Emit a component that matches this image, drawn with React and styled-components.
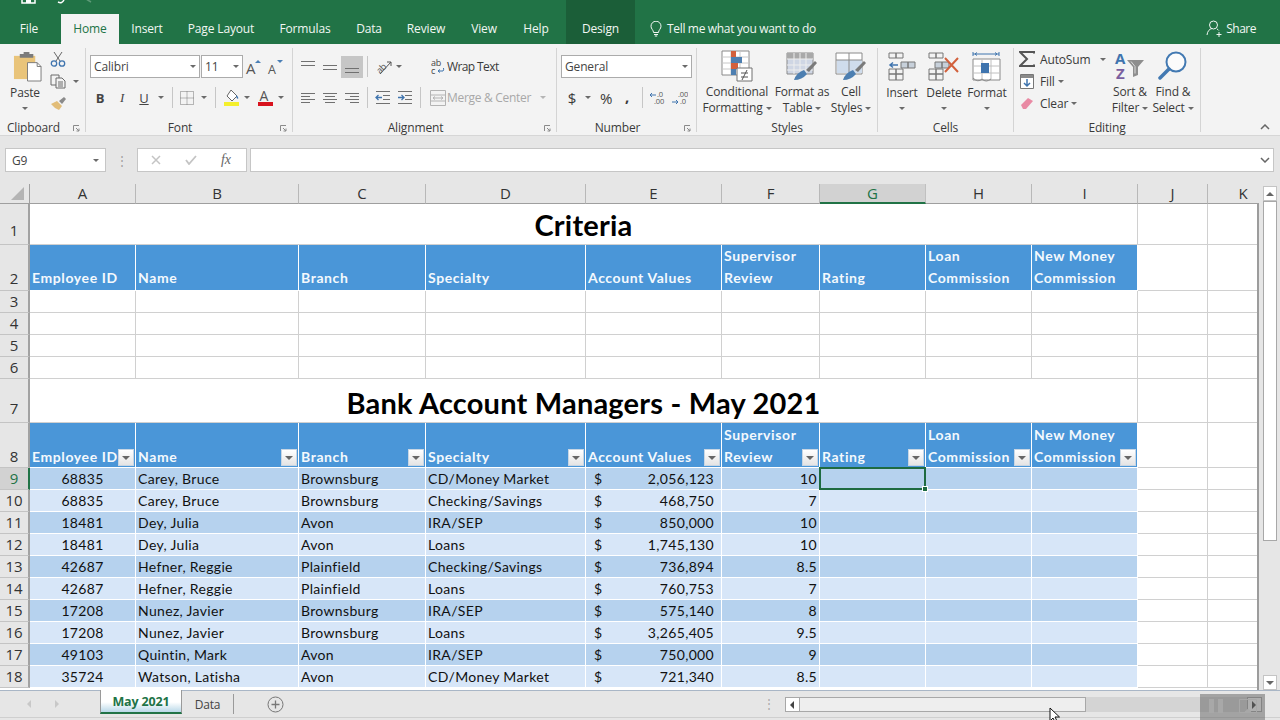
import React from "react";
import styled, { createGlobalStyle } from "styled-components";

const Global = createGlobalStyle`
  html, body { margin: 0; padding: 0; background: #e6e6e6; }
  * { box-sizing: border-box; }
`;

const Page = styled.div`
  width: 1280px; height: 720px; overflow: hidden; position: relative;
  display: flex; flex-direction: column; background: #e6e6e6;
  font-family: "Open Sans", "Liberation Sans", sans-serif; font-size: 12px; color: #3a3a3a; letter-spacing: -.15px;
`;
const TitleBar = styled.div`height: 14px; background: #217346; display: flex; align-items: flex-start; overflow: hidden;`;
const TabBar = styled.div`height: 30px; background: #217346; display: flex; align-items: stretch; color: #f1f7f3; position: relative;`;
const Tab = styled.div`
  width: ${p => p.$w}px; display: flex; align-items: center; justify-content: center;
  background: ${p => p.$active ? "#f3f3f3" : "transparent"}; color: ${p => p.$active ? "#217346" : "inherit"};
  margin-left: ${p => p.$ml || 0}px; padding-bottom: 1px;
`;
const DesignTab = styled(Tab)`height: 44px; margin-top: -14px; padding-top: 14px; background: #1b5e38; z-index: 1;`;
const TellMe = styled.div`display: flex; align-items: center; gap: 5px; margin-left: 15px; padding-bottom: 1px; letter-spacing: -.33px;`;
const Share = styled.div`margin-left: auto; margin-right: 24px; display: flex; align-items: center; gap: 3px; padding-bottom: 1px; letter-spacing: -.5px;`;

const Ribbon = styled.div`height: 92px; background: #f3f3f3; display: flex; position: relative; border-bottom: 1px solid #d6d6d6;`;
const Group = styled.div`
  width: ${p => p.$w}px; height: 84px; margin-top: 4px; border-right: 1px solid #d4d4d4;
  display: flex; flex-direction: column; position: relative;
`;
const GroupBody = styled.div`flex: 1; display: flex; padding-left: ${p => p.$pl || 0}px; min-height: 0;`;
const RowStack = styled.div`display: flex; flex-direction: column; padding: 7px 0 0 ${p => p.$pl || 0}px; gap: 8px;`;
const ToolRow = styled.div`display: flex; align-items: center; height: ${p => p.$h || 23}px;`;
const Footer = styled.div`height: 16px; display: flex; align-items: center; position: relative; top: 4px;`;
const GroupLabel = styled.div`flex: 1; text-align: center; white-space: nowrap; line-height: 16px;`;
const Launcher = styled.div`width: 18px; display: flex; justify-content: center; align-items: center;`;
const Slot = styled.div`
  width: ${p => p.$w}px; height: 22px; display: flex; align-items: center; justify-content: center; flex: none;
  margin-left: ${p => p.$ml || 0}px; background: ${p => p.$on ? "#c6c6c6" : "transparent"};
`;
const Sep = styled.div`width: 1px; height: 21px; background: #c6c6c6;`;
const Caret = styled.span`
  display: inline-block; width: 0; height: 0; border-left: 3px solid transparent; border-right: 3px solid transparent;
  border-top: 3px solid ${p => p.$c || "#6a6a6a"}; margin-left: ${p => p.$ml || 0}px; vertical-align: middle; flex: none;
`;
const Select = styled.div`
  width: ${p => p.$w}px; height: 23px; background: #fff; border: 1px solid #ababab; margin-left: ${p => p.$ml || 0}px;
  display: flex; align-items: center; justify-content: space-between; padding: 0 3px 0 3px; color: #444; flex: none;
`;
const Large = styled.div`
  width: ${p => p.$w}px; flex: none; display: flex; flex-direction: column; align-items: center; line-height: 16px; white-space: nowrap;
`;
const LargeIcon = styled.div`height: 36px; margin-top: 2px; margin-bottom: 2px; padding-left: ${p => p.$pl || 0}px; display: flex; align-items: center; justify-content: center;`;
const LargeLine = styled.div`height: 16px; display: flex; align-items: center; justify-content: center; gap: 3px;`;
const SmallCol = styled.div`width: ${p => p.$w}px; flex: none; display: flex; flex-direction: column;`;
const SmallRow = styled.div`height: 22px; display: flex; align-items: center; padding-left: ${p => p.$pl || 0}px;`;
const ToolText = styled.span`white-space: nowrap; color: ${p => p.$dim ? "#a8a8a8" : "inherit"}; margin-left: ${p => p.$ml || 0}px; letter-spacing: ${p => p.$ls ?? -.15}px;`;
const BigGlyph = styled.span`font-size: 15px; line-height: 20px;`;
const Comma = styled.b`font-size: 15px; line-height: 20px; margin-top: -4px;`;
const FontBtn = styled.span`
  font-style: ${p => p.$i ? "italic" : "normal"}; font-weight: ${p => p.$b ? 700 : 400}; font-size: 13px;
  font-family: ${p => p.$i ? '"Liberation Serif", serif' : '"Open Sans", sans-serif'};
  text-decoration: ${p => p.$u ? "underline" : "none"}; color: #444;
`;
const Collapse = styled.div`position: absolute; right: 10px; bottom: 5px; line-height: 0;`;

const FormulaBar = styled.div`height: 24px; margin-top: 12px; display: flex; align-items: stretch; padding: 0 6px 0 5px; flex: none;`;
const NameBox = styled.div`
  width: 101px; background: #fff; border: 1px solid #c6c6c6; display: flex; align-items: center; justify-content: space-between;
  padding: 0 6px 0 6px; color: #444;
`;
const Grip = styled.div`width: 31px; display: flex; justify-content: center; align-items: center; color: #a0a0a0;`;
const FxBox = styled.div`width: 110px; background: #fff; border: 1px solid #c6c6c6; display: flex; align-items: center; padding-left: 13px; gap: 24px;`;
const FxLabel = styled.span`font: italic 14px "Liberation Serif", serif; color: #666;`;
const FInput = styled.div`flex: 1; margin-left: 3px; background: #fff; border: 1px solid #c6c6c6; display: flex; align-items: center; justify-content: flex-end; padding-right: 3px;`;

const SheetArea = styled.div`margin-top: 12px; height: 506px; display: flex; flex: none;`;
const GridWrap = styled.div`width: 1259px; overflow: hidden; font-family: Lato, "Open Sans", sans-serif; font-size: 14px; color: #111; letter-spacing: .33px;`;
const GridBody = styled.div`height: 486px; overflow: hidden; background: #fff; border-right: 2px solid #9c9c9c;`;
const COLS = "30px 106px 163px 127px 160px 136px 98px 106px 106px 106px 70px 71px";
const Row = styled.div`display: grid; grid-template-columns: ${COLS}; height: ${p => p.$h}px;`;
const ColHead = styled.div`
  background: ${p => p.$sel ? "#d2d2d2" : "#e6e6e6"}; display: flex; align-items: flex-start; justify-content: center;
  border-right: 1px solid ${p => p.$sel ? "#c0c0c0" : "#b8b8b8"};
  border-bottom: ${p => p.$sel ? "2px solid #217346" : "1px solid #9f9f9f"};
  font: 15px/18px "Open Sans", sans-serif; letter-spacing: 0; color: ${p => p.$sel ? "#217346" : "#333"};
`;
const Corner = styled(ColHead)`justify-content: flex-end; align-items: flex-end; padding: 0 5px 3px 0; border-right-color: #9f9f9f;`;
const RowHead = styled.div`
  background: ${p => p.$sel ? "#d2d2d2" : "#e6e6e6"}; display: flex; align-items: flex-end; justify-content: center; padding-bottom: ${p => p.$pb ?? 0}px;
  border-right: ${p => p.$sel ? "2px solid #217346" : "2px solid #a2a2a2"}; border-bottom: 1px solid #c4c4c4;
  font: 15px/21px "Open Sans", sans-serif; letter-spacing: 0; color: ${p => p.$sel ? "#217346" : "#333"};
`;
const Plain = styled.div`border-right: 1px solid #d0d0d0; border-bottom: 1px solid #d0d0d0; background: #fff;`;
const Title = styled.div`
  grid-column: span 9; background: #fff; border-right: 1px solid #d0d0d0; border-bottom: 1px solid #d0d0d0;
  display: flex; align-items: flex-end; justify-content: center; font-weight: 700; font-size: 29px; letter-spacing: .2px; color: #000; padding-bottom: 0; line-height: 38px;
`;
const HeadCell = styled.div`
  background: #4a96d8; color: #f4f9fd; font-weight: 700; font-size: 14px; line-height: 22px; letter-spacing: .6px;
  border-right: 1px solid #fff; border-bottom: 1px solid #fff; display: flex; align-items: flex-end; justify-content: space-between;
  padding: 0 1px ${p => p.$pb || 0}px 2px; white-space: nowrap;
`;
const HeadText = styled.div`margin-bottom: ${p => p.$mb || 0}px;`;
const FilterBtn = styled.div`
  width: 16px; height: 17px; margin-bottom: 1px; background: linear-gradient(#ffffff, #e4e4e4); border: 1px solid #c8d6e4; display: flex; align-items: center; justify-content: center; flex: none;
`;
const Cell = styled.div`
  background: ${p => p.$dark ? "#b6d2ee" : "#d7e6f8"}; border-right: 1px solid #fff; border-bottom: 1px solid #fff;
  display: flex; align-items: center; justify-content: ${p => p.$a || "flex-start"}; padding: 0 ${p => p.$pr ?? 2}px 1px ${p => p.$pl ?? 2}px;
  position: relative; white-space: nowrap; color: #111;
`;
const Active = styled.div`position: absolute; left: -1px; top: -1px; right: -1px; bottom: -1px; border: 2px solid #1e6b41; z-index: 2;`;
const Handle = styled.div`position: absolute; right: -4px; bottom: -4px; width: 6px; height: 6px; background: #1e6b41; border: 1px solid #fff;`;

const VScroll = styled.div`width: 21px; display: flex; flex-direction: column; align-items: center; padding: 2px 0 0 0; height: 506px;`;
const VBtn = styled.div`width: 14px; height: 15px; background: #fff; border: 1px solid #c4c4c4; display: flex; align-items: center; justify-content: center; flex: none;`;
const VThumb = styled.div`width: 14px; height: 340px; background: #fff; border: 1px solid #a8a8a8; flex: none;`;
const VTrack = styled.div`flex: 1;`;

const SheetBar = styled.div`
  height: 28px; display: flex; align-items: flex-start; position: relative; flex: none; background: #e6e6e6;
  border-top: 1px solid #a9b6c6; border-bottom: 1px solid #cfcfcf;
`;
const Nav = styled.div`width: 100px; height: 26px; display: flex; align-items: center; padding-left: 25px; gap: 18px;`;
const SheetTab = styled.div`
  width: 82px; height: 24px; background: linear-gradient(#ffffff 55%, #b9d8e8); border-left: 1px solid #9a9a9a; border-right: 1px solid #9a9a9a;
  border-bottom: 2px solid #217346; color: #217346; font-weight: 700; font-size: 12.5px; display: flex; align-items: center; justify-content: center; margin-top: -1px;
`;
const SheetTab2 = styled.div`width: 52px; height: 20px; margin-top: 3px; border-right: 1px solid #9a9a9a; display: flex; align-items: center; justify-content: center; color: #444;`;
const AddSheet = styled.div`width: 84px; padding-left: 33px; height: 26px; display: flex; align-items: center;`;
const Dots = styled.div`width: 457px; display: flex; justify-content: flex-end; padding: 4px 0 0 0; height: 26px; color: #aaa;`;
const HScroll = styled.div`margin-left: 10px; height: 15px; margin-top: 6px; width: 477px; background: #d4d4d4; display: flex;`;
const HBtn = styled.div`width: 15px; background: #fff; border: 1px solid #a8a8a8; display: flex; align-items: center; justify-content: center; flex: none;`;
const HThumb = styled.div`width: 286px; background: #eeeeee; border: 1px solid #a8a8a8; border-left: 0;`;
const HTrack = styled.div`flex: 1;`;
const MediaOverlay = styled.div`
  position: absolute; left: 1200px; top: 3px; width: 65px; height: 30px; background: rgba(95,95,95,.5); display: flex; align-items: center; justify-content: space-between; padding: 2px 8px 8px 8px;
`;
const Cursor = styled.div`position: absolute; left: 1049px; top: 16px; z-index: 5; line-height: 0;`;

const QAT = () => (
  <svg width="100" height="14" viewBox="0 0 100 14">
    <path d="M22 -8h13v11h-13z" fill="none" stroke="#fff" strokeWidth="1.500" />
    <path d="M26 0h5v3h-5z" fill="#fff" />
    <path d="M58 2q4 2 6 -2" stroke="#fff" strokeWidth="1.500" fill="none" />
    <path d="M86 -1l5 3" stroke="#5f9a78" strokeWidth="1.500" fill="none" />
  </svg>
);
const Bulb = () => (
  <svg width="12" height="16" viewBox="0 0 12 16" fill="none" stroke="#f1f7f3">
    <path d="M3.500 11.500C3.500 9 1 8 1 5.200A5 5 0 0 1 11 5.200C11 8 8.500 9 8.500 11.500Z" /><path d="M4 13.500h4M4.800 15h2.400" />
  </svg>
);
const ShareIco = () => (
  <svg width="17" height="17" viewBox="0 0 17 17" fill="none" stroke="#f1f7f3">
    <circle cx="7.500" cy="5" r="4" /><path d="M1 15c.5-4 2.500-6 5-6.500M11 9c.8.400 1.300.800 1.800 1.500M13 12v5M10.500 14.500h5" />
  </svg>
);
const PasteIco = () => (
  <svg width="29" height="31" viewBox="0 0 30 32">
    <path d="M1 5h22v24H1z" fill="#e9c47a" /><path d="M7 3h4V1h6v2h4v4H7z" fill="#7b7b7b" />
    <path d="M15 12h10l4 4v15H15z" fill="#fff" stroke="#7b7b7b" /><path d="M25 12v4h4" fill="none" stroke="#7b7b7b" />
  </svg>
);
const CutIco = () => (
  <svg width="16" height="16" viewBox="0 0 16 16" fill="none"><path d="M4 1l6 9M12 1L6 10" stroke="#666" /><circle cx="4" cy="12.500" r="2.700" stroke="#3f74ae" strokeWidth="1.300" /><circle cx="12" cy="12.500" r="2.700" stroke="#3f74ae" strokeWidth="1.300" /></svg>
);
const CopyIco = () => (
  <svg width="16" height="15" viewBox="0 0 16 15" fill="#f3f3f3" stroke="#6a6a6a"><path d="M1 1h8v10H1z" /><path d="M6 4h6l3 3v7H6z" /><path d="M8 8h5M8 10h5M8 12h5" /></svg>
);
const PainterIco = () => (
  <svg width="17" height="15" viewBox="0 0 17 15"><path d="M1 8l6-3 5 5-3 4-4-2z" fill="#e2bd78" /><path d="M9 5l5-4 2 2-4 5z" fill="#8a8a8a" /></svg>
);
const AIco = ({ up }) => (
  <svg width="20" height="16" viewBox="0 0 20 16">
    <text x="2" y="15" fontFamily="Open Sans" fontSize={up ? 15 : 12.500} fill="#555">A</text>
    <path d={up ? "M11 4l3-3 3 3z" : "M11 1h6l-3 3z"} fill="#4a7fb5" />
  </svg>
);
const BordersIco = () => (
  <svg width="14" height="14" viewBox="0 0 14 14" fill="none" stroke="#777" strokeDasharray="1 1"><path d="M.500.500h13v13h-13zM7 .500v13M.500 7h13" /></svg>
);
const FillIco = () => (
  <svg width="17" height="17" viewBox="0 0 17 17"><path d="M8 1l6 6-5 5-5-5z" fill="#fff" stroke="#666" /><path d="M13 6q3 2 2 4-2-1-2-4z" fill="#3f74ae" /><path d="M1 13h15v4H1z" fill="#f4ef2c" /></svg>
);
const ColorIco = () => (
  <svg width="17" height="17" viewBox="0 0 17 17"><text x="2.500" y="12" fontFamily="Open Sans" fontSize="14" fill="#555">A</text><path d="M1 13h15v4H1z" fill="#d8121e" /></svg>
);
const Lines = ({ ys, xs }) => (
  <svg width="16" height="14" viewBox="0 0 16 14" fill="none" stroke="#707070">
    {ys.map((y, i) => <path key={i} d={`M${xs ? xs[i][0] : 1} ${y + .5}H${xs ? xs[i][1] : 15}`} />)}
  </svg>
);
const OrientIco = () => (
  <svg width="18" height="16" viewBox="0 0 18 16"><text transform="rotate(-45 7 9)" x="1" y="12" fontFamily="Open Sans" fontSize="9" fill="#555">ab</text><path d="M5 15L16 3M12 3h4v4" stroke="#555" fill="none" /></svg>
);
const IndentIco = ({ rev }) => (
  <svg width="16" height="14" viewBox="0 0 16 14" fill="none">
    <path d="M1 .500h14M8 4.500h7M8 8.500h7M1 12.500h14" stroke="#707070" />
    <path d={rev ? "M7 6.500H1m2.500-2.500L1 6.500 3.500 9" : "M1 6.500h6M4.500 4L7 6.500 4.500 9"} stroke="#3f74ae" strokeWidth="1.300" />
  </svg>
);
const WrapIco = () => (
  <svg width="14" height="16" viewBox="0 0 14 16"><text x="0" y="7" fontFamily="Open Sans" fontSize="9" fill="#444">ab</text><text x="0" y="15" fontFamily="Open Sans" fontSize="9" fill="#444">c</text><path d="M7 12h5q1-1 .500-3M7 12l2-1.500M7 12l2 1.500" stroke="#3f74ae" fill="none" /></svg>
);
const MergeIco = () => (
  <svg width="16" height="16" viewBox="0 0 16 16" fill="none" stroke="#b3b3b3"><path d="M.500.500h15v15H.500zM.500 5h15M.500 11h15M3 8h10M3 8l2-1.500M3 8l2 1.500M13 8l-2-1.500M13 8l-2 1.500" /></svg>
);
const DecIco = ({ rev }) => (
  <svg width="16" height="16" viewBox="0 0 16 16">
    <text x={rev ? 6 : 7} y="7" fontFamily="Open Sans" fontSize="7.500" fill="#555">{rev ? ".00" : ".0"}</text>
    <text x={rev ? 8 : 4} y="14" fontFamily="Open Sans" fontSize="7.500" fill="#555">{rev ? ".0" : ".00"}</text>
    <path d={rev ? "M0 12h6M4 10l2 2-2 2" : "M0 5h6M2 3L0 5l2 2"} stroke="#3f74ae" fill="none" />
  </svg>
);
const CondIco = () => (
  <svg width="32" height="32" viewBox="0 0 32 32">
    <path d="M1 1h27v24H1z" fill="#fff" stroke="#8a8a8a" /><path d="M10 1v24M19 1v24M1 7h27M1 13h27M1 19h27" stroke="#c8c8c8" fill="none" />
    <path d="M10 1h5v6h-5zM10 13h7v6h-7z" fill="#d2603c" /><path d="M10 7h11v6H10zM10 19h5v6h-5z" fill="#4d7fb1" />
    <path d="M16 18h15v13H16z" fill="#fff" stroke="#707070" /><path d="M20 23h7M20 27h7M26 20l-5 10" stroke="#555" fill="none" />
  </svg>
);
const TableIco = () => (
  <svg width="32" height="32" viewBox="0 0 32 32">
    <path d="M1 3h26v21H1z" fill="#cfd6e4" stroke="#8a8a8a" /><path d="M1 3h26v6H1z" fill="#a9a9a9" />
    <path d="M8 3v21M14 3v21M20 3v21M1 9h26M1 15h26M1 20h26" stroke="#eee" fill="none" />
    <path d="M8 30q2-7 10-10l3 4q-5 6-13 6z" fill="#4d7fb1" /><path d="M20 20l9-9 2 2-8 9z" fill="#7a7a7a" />
  </svg>
);
const CellIco = () => (
  <svg width="32" height="32" viewBox="0 0 32 32">
    <path d="M1 3h26v21H1z" fill="#fff" stroke="#8a8a8a" /><path d="M2 10h25v13H2z" fill="#cfdcec" />
    <path d="M1 10h26M14 3v21" stroke="#8a8a8a" fill="none" />
    <path d="M8 30q2-7 10-10l3 4q-5 6-13 6z" fill="#4d7fb1" /><path d="M20 20l9-9 2 2-8 9z" fill="#7a7a7a" />
  </svg>
);
const InsertIco = () => (
  <svg width="28" height="30" viewBox="0 0 28 30" fill="none" stroke="#777">
    <path d="M1 1h7v5H1zM8 1h7v5H8zM1 17h7v5H1zM8 17h7v5H8zM1 22h7v6H1zM8 22h7v6H8z" />
    <path d="M13 10h7v6h-7zM20 10h7v6h-7z" fill="#c7d0da" /><path d="M10 13H2M5 10.500L2 13l3 2.500" stroke="#3f74ae" strokeWidth="1.500" />
  </svg>
);
const DeleteIco = () => (
  <svg width="32" height="30" viewBox="0 0 32 30" fill="none" stroke="#777">
    <path d="M1 1h7v5H1zM8 1h7v5H8zM1 17h7v5H1zM8 17h7v5H8zM1 22h7v6H1zM8 22h7v6H8z" />
    <path d="M7 10h7v6H7zM14 10h7v6h-7z" fill="#c7d0da" /><path d="M17 6l13 14M30 6L17 20" stroke="#d2603c" strokeWidth="2" />
  </svg>
);
const FormatIco = () => (
  <svg width="30" height="32" viewBox="0 0 30 32" fill="none">
    <path d="M1 3h26M1 1v4M27 1v4M3 3l2-1.500M3 3l2 1.500M25 3l-2-1.500M25 3l-2 1.500" stroke="#3f74ae" />
    <path d="M1 8h27v21H1z" fill="#fff" stroke="#8a8a8a" /><path d="M10 8v21M19 8v21M1 15h27M1 22h27" stroke="#c0c0c0" />
    <path d="M9 12h8v10H9z" fill="#3f74ae" /><path d="M1 27q5 5 9 1q4 4 9 0" stroke="#8a8a8a" />
  </svg>
);
const SigmaIco = () => (
  <svg width="16" height="16" viewBox="0 0 16 16" fill="none" stroke="#555" strokeWidth="2"><path d="M15 2.500V1H1l7 7-7 7h14v-1.500" /></svg>
);
const FillDown = () => (
  <svg width="14" height="15" viewBox="0 0 14 15"><path d="M.500.500h13v14H.500z" fill="#fff" stroke="#777" /><path d="M1 1h12v3H1z" fill="#8a8a8a" /><path d="M7 5v7M4 9l3 3 3-3" stroke="#3f74ae" strokeWidth="1.500" fill="none" /></svg>
);
const Eraser = () => (
  <svg width="14" height="13" viewBox="0 0 14 13"><path d="M1 8l7-7 5 3-7 8H3z" fill="#e98aa4" /></svg>
);
const SortIco = () => (
  <svg width="32" height="30" viewBox="0 0 32 30">
    <text x="1" y="13" fontFamily="Open Sans" fontWeight="700" fontSize="15" fill="#3f74ae">A</text>
    <text x="2" y="28" fontFamily="Open Sans" fontWeight="700" fontSize="15" fill="#7a5fa0">Z</text>
    <path d="M13 9h17l-6 7v8l-5 2V16z" fill="#8e8e8e" /><path d="M17 10.500l4 5v7" stroke="#ddd" fill="none" />
  </svg>
);
const FindIco = () => (
  <svg width="30" height="30" viewBox="0 0 30 30" fill="none"><circle cx="18" cy="11" r="9.500" stroke="#4279b2" strokeWidth="2" fill="#fbfbfb" /><path d="M11 18l-9 9" stroke="#4279b2" strokeWidth="3.500" strokeLinecap="round" /></svg>
);
const LaunchIco = () => (
  <svg width="7" height="7" viewBox="0 0 7 7" fill="none" stroke="#8a8a8a"><path d="M.500 6V.500H6M3 3l3 3M6 3.500V6H3.500" /></svg>
);
const Chevron = ({ up }) => (
  <svg width="10" height="6" viewBox="0 0 10 6" fill="none" stroke="#666" strokeWidth="1.500"><path d={up ? "M1 5l4-4 4 4" : "M1 1l4 4 4-4"} /></svg>
);
const TriBtn = ({ dir, c = "#666" }) => {
  const d = { up: "M1 6l4-4 4 4z", down: "M1 2h8L5 6z", left: "M6 0v8L2 4z", right: "M2 0v8l4-4z" }[dir];
  return <svg width="10" height="8" viewBox="0 0 10 8"><path d={d} fill={c} /></svg>;
};
const Launch = () => <Launcher><LaunchIco /></Launcher>;

const rows = [
  [9, "68835", "Carey, Bruce", "Brownsburg", "CD/Money Market", "2,056,123", "10"],
  [10, "68835", "Carey, Bruce", "Brownsburg", "Checking/Savings", "468,750", "7"],
  [11, "18481", "Dey, Julia", "Avon", "IRA/SEP", "850,000", "10"],
  [12, "18481", "Dey, Julia", "Avon", "Loans", "1,745,130", "10"],
  [13, "42687", "Hefner, Reggie", "Plainfield", "Checking/Savings", "736,894", "8.5"],
  [14, "42687", "Hefner, Reggie", "Plainfield", "Loans", "760,753", "7"],
  [15, "17208", "Nunez, Javier", "Brownsburg", "IRA/SEP", "575,140", "8"],
  [16, "17208", "Nunez, Javier", "Brownsburg", "Loans", "3,265,405", "9.5"],
  [17, "49103", "Quintin, Mark", "Avon", "IRA/SEP", "750,000", "9"],
  [18, "35724", "Watson, Latisha", "Avon", "CD/Money Market", "721,340", "8.5"],
];
const heads = [["Employee ID"], ["Name"], ["Branch"], ["Specialty"], ["Account Values"], ["Supervisor", "Review"], ["Rating"], ["Loan", "Commission"], ["New Money", "Commission"]];
const letters = ["A", "B", "C", "D", "E", "F", "G", "H", "I", "J", "K"];

const HeaderRow = ({ num, h, filter }) => (
  <Row $h={h}>
    <RowHead $pb={filter ? 0 : 1}>{num}</RowHead>
    {heads.map((cell, i) => (
      <HeadCell key={i} $pb={filter ? 0 : 1}>
        <HeadText $mb={filter ? -1 : 0}>{cell.map(t => <div key={t}>{t}</div>)}</HeadText>
        {filter && <FilterBtn><TriBtn dir="down" /></FilterBtn>}
      </HeadCell>
    ))}
    <Plain /><Plain />
  </Row>
);
const PlainRow = ({ num, h = 22 }) => (
  <Row $h={h}>
    <RowHead>{num}</RowHead>
    {Array.from({ length: 11 }, (_, i) => <Plain key={i} />)}
  </Row>
);
const TitleRow = ({ num, h, children }) => (
  <Row $h={h}>
    <RowHead $pb={3}>{num}</RowHead>
    <Title>{children}</Title>
    <Plain /><Plain />
  </Row>
);
const DataRow = ({ r, dark }) => (
  <Row $h={22}>
    <RowHead $sel={r[0] === 9}>{r[0]}</RowHead>
    <Cell $dark={dark} $a="center">{r[1]}</Cell>
    <Cell $dark={dark}>{r[2]}</Cell>
    <Cell $dark={dark}>{r[3]}</Cell>
    <Cell $dark={dark}>{r[4]}</Cell>
    <Cell $dark={dark} $a="space-between" $pl={8} $pr={7}><span>$</span><span>{r[5]}</span></Cell>
    <Cell $dark={dark} $a="flex-end">{r[6]}</Cell>
    <Cell $dark={dark}>{r[0] === 9 && <Active><Handle /></Active>}</Cell>
    <Cell $dark={dark} /><Cell $dark={dark} />
    <Plain /><Plain />
  </Row>
);

export default function App() {
  return (
    <Page>
      <Global />
      <TitleBar><QAT /></TitleBar>
      <TabBar>
        <Tab $w={58}>File</Tab>
        <Tab $w={58} $ml={3} $active>Home</Tab>
        <Tab $w={56}>Insert</Tab>
        <Tab $w={92}>Page Layout</Tab>
        <Tab $w={76}>Formulas</Tab>
        <Tab $w={52}>Data</Tab>
        <Tab $w={62}>Review</Tab>
        <Tab $w={54}>View</Tab>
        <Tab $w={50}>Help</Tab>
        <DesignTab $w={69} $ml={5}>Design</DesignTab>
        <TellMe><Bulb />Tell me what you want to do</TellMe>
        <Share><ShareIco />Share</Share>
      </TabBar>

      <Ribbon>
        <Group $w={86}>
          <GroupBody>
            <Large $w={50}>
              <LargeIcon $pl={4}><PasteIco /></LargeIcon>
              <LargeLine>Paste</LargeLine>
              <LargeLine><Caret /></LargeLine>
            </Large>
            <SmallCol $w={35}>
              <SmallRow><CutIco /></SmallRow>
              <SmallRow><CopyIco /><Caret $ml={7} /></SmallRow>
              <SmallRow><PainterIco /></SmallRow>
            </SmallCol>
          </GroupBody>
          <Footer><GroupLabel>Clipboard</GroupLabel><Launch /></Footer>
        </Group>

        <Group $w={207}>
          <GroupBody>
            <RowStack $pl={4}>
              <ToolRow>
                <Select $w={110}>Calibri<Caret /></Select>
                <Select $w={42} $ml={1}>11<Caret /></Select>
                <Slot $w={22}><AIco up /></Slot>
                <Slot $w={22}><AIco /></Slot>
              </ToolRow>
              <ToolRow>
                <Slot $w={20}><FontBtn $b>B</FontBtn></Slot>
                <Slot $w={24}><FontBtn $i>I</FontBtn></Slot>
                <Slot $w={20}><FontBtn $u>U</FontBtn></Slot>
                <Slot $w={14}><Caret /></Slot>
                <Slot $w={8}><Sep /></Slot>
                <Slot $w={22}><BordersIco /></Slot>
                <Slot $w={12}><Caret /></Slot>
                <Slot $w={10}><Sep /></Slot>
                <Slot $w={22}><FillIco /></Slot>
                <Slot $w={10}><Caret /></Slot>
                <Slot $w={26}><ColorIco /></Slot>
                <Slot $w={6}><Caret /></Slot>
              </ToolRow>
            </RowStack>
          </GroupBody>
          <Footer><GroupLabel>Font</GroupLabel><Launch /></Footer>
        </Group>

        <Group $w={264}>
          <GroupBody>
            <RowStack $pl={4}>
              <ToolRow>
                <Slot $w={22}><Lines ys={[1, 5]} /></Slot>
                <Slot $w={22}><Lines ys={[5, 9]} /></Slot>
                <Slot $w={22} $on><Lines ys={[8, 12]} /></Slot>
                <Slot $w={8}><Sep /></Slot>
                <Slot $w={23} $ml={1}><OrientIco /></Slot>
                <Slot $w={7}><Caret /></Slot>
                <Slot $w={18} $ml={27}><WrapIco /></Slot>
                <ToolText $ls={-.6}>Wrap Text</ToolText>
              </ToolRow>
              <ToolRow>
                <Slot $w={22}><Lines ys={[2, 5, 8, 11]} xs={[[1, 15], [1, 10], [1, 15], [1, 10]]} /></Slot>
                <Slot $w={22}><Lines ys={[2, 5, 8, 11]} xs={[[1, 15], [3, 13], [1, 15], [3, 13]]} /></Slot>
                <Slot $w={22}><Lines ys={[2, 5, 8, 11]} xs={[[1, 15], [6, 15], [1, 15], [6, 15]]} /></Slot>
                <Slot $w={8}><Sep /></Slot>
                <Slot $w={22} $ml={1}><IndentIco rev /></Slot>
                <Slot $w={22}><IndentIco /></Slot>
                <Slot $w={8}><Sep /></Slot>
                <Slot $w={19} $ml={4}><MergeIco /></Slot>
                <ToolText $dim $ls={-.3}>Merge &amp; Center</ToolText>
                <Caret $ml={9} $c="#b5b5b5" />
              </ToolRow>
            </RowStack>
          </GroupBody>
          <Footer><GroupLabel>Alignment</GroupLabel><Launch /></Footer>
        </Group>

        <Group $w={140}>
          <GroupBody>
            <RowStack $pl={4}>
              <ToolRow><Select $w={131}>General<Caret /></Select></ToolRow>
              <ToolRow>
                <Slot $w={22}><BigGlyph>$</BigGlyph></Slot>
                <Slot $w={10}><Caret /></Slot>
                <Slot $w={22} $ml={2}><BigGlyph>%</BigGlyph></Slot>
                <Slot $w={20}><Comma>,</Comma></Slot>
                <Slot $w={10}><Sep /></Slot>
                <Slot $w={22}><DecIco /></Slot>
                <Slot $w={22}><DecIco rev /></Slot>
              </ToolRow>
            </RowStack>
          </GroupBody>
          <Footer><GroupLabel>Number</GroupLabel><Launch /></Footer>
        </Group>

        <Group $w={181}>
          <GroupBody>
            <Large $w={80}>
              <LargeIcon><CondIco /></LargeIcon>
              <LargeLine>Conditional</LargeLine>
              <LargeLine>Formatting<Caret /></LargeLine>
            </Large>
            <Large $w={50}>
              <LargeIcon><TableIco /></LargeIcon>
              <LargeLine>Format as</LargeLine>
              <LargeLine>Table<Caret /></LargeLine>
            </Large>
            <Large $w={48}>
              <LargeIcon><CellIco /></LargeIcon>
              <LargeLine>Cell</LargeLine>
              <LargeLine>Styles<Caret /></LargeLine>
            </Large>
          </GroupBody>
          <Footer><GroupLabel>Styles</GroupLabel></Footer>
        </Group>

        <Group $w={136}>
          <GroupBody $pl={1}>
            <Large $w={46}>
              <LargeIcon><InsertIco /></LargeIcon>
              <LargeLine>Insert</LargeLine>
              <LargeLine><Caret /></LargeLine>
            </Large>
            <Large $w={38}>
              <LargeIcon><DeleteIco /></LargeIcon>
              <LargeLine>Delete</LargeLine>
              <LargeLine><Caret /></LargeLine>
            </Large>
            <Large $w={48}>
              <LargeIcon><FormatIco /></LargeIcon>
              <LargeLine>Format</LargeLine>
              <LargeLine><Caret /></LargeLine>
            </Large>
          </GroupBody>
          <Footer><GroupLabel>Cells</GroupLabel></Footer>
        </Group>

        <Group $w={187}>
          <GroupBody>
            <SmallCol $w={96}>
              <SmallRow><Slot $w={26}><SigmaIco /></Slot><ToolText>AutoSum</ToolText><Caret $ml={10} /></SmallRow>
              <SmallRow><Slot $w={26}><FillDown /></Slot><ToolText>Fill</ToolText><Caret $ml={3} /></SmallRow>
              <SmallRow><Slot $w={26}><Eraser /></Slot><ToolText>Clear</ToolText><Caret $ml={3} /></SmallRow>
            </SmallCol>
            <Large $w={40}>
              <LargeIcon><SortIco /></LargeIcon>
              <LargeLine>Sort &amp;</LargeLine>
              <LargeLine>Filter<Caret /></LargeLine>
            </Large>
            <Large $w={46}>
              <LargeIcon><FindIco /></LargeIcon>
              <LargeLine>Find &amp;</LargeLine>
              <LargeLine>Select<Caret /></LargeLine>
            </Large>
          </GroupBody>
          <Footer><GroupLabel>Editing</GroupLabel></Footer>
        </Group>
        <Collapse><Chevron up /></Collapse>
      </Ribbon>

      <FormulaBar>
        <NameBox>G9<Caret /></NameBox>
        <Grip>⋮</Grip>
        <FxBox>
          <svg width="10" height="10" viewBox="0 0 10 10" stroke="#c4c4c4" strokeWidth="1.500"><path d="M1 1l8 8M9 1L1 9" /></svg>
          <svg width="12" height="10" viewBox="0 0 12 10" stroke="#c4c4c4" strokeWidth="1.800" fill="none"><path d="M1 5l3 4 7-8" /></svg>
          <FxLabel>fx</FxLabel>
        </FxBox>
        <FInput><Chevron /></FInput>
      </FormulaBar>

      <SheetArea>
        <GridWrap>
          <Row $h={20}>
            <Corner><svg width="13" height="13" viewBox="0 0 13 13"><path d="M13 0v13H0z" fill="#b4b4b4" /></svg></Corner>
            {letters.map(l => <ColHead key={l} $sel={l === "G"}>{l}</ColHead>)}
          </Row>
          <GridBody>
            <TitleRow num={1} h={41}>Criteria</TitleRow>
            <HeaderRow num={2} h={46} />
            <PlainRow num={3} />
            <PlainRow num={4} />
            <PlainRow num={5} />
            <PlainRow num={6} />
            <TitleRow num={7} h={44}>Bank Account Managers - May 2021</TitleRow>
            <HeaderRow num={8} h={45} filter />
            {rows.map((r, i) => <DataRow key={r[0]} r={r} dark={i % 2 === 0} />)}
          </GridBody>
        </GridWrap>
        <VScroll>
          <VBtn><TriBtn dir="up" /></VBtn>
          <VThumb />
          <VTrack />
          <VBtn><TriBtn dir="down" /></VBtn>
        </VScroll>
      </SheetArea>

      <SheetBar>
        <Nav><TriBtn dir="left" c="#c8c8c8" /><TriBtn dir="right" c="#c8c8c8" /></Nav>
        <SheetTab>May 2021</SheetTab>
        <SheetTab2>Data</SheetTab2>
        <AddSheet>
          <svg width="17" height="17" viewBox="0 0 17 17" fill="none" stroke="#777"><circle cx="8.500" cy="8.500" r="7.500" /><path d="M8.500 4.500v8M4.500 8.500h8" strokeWidth="1.300" /></svg>
        </AddSheet>
        <Dots>⋮</Dots>
        <HScroll>
          <HBtn><TriBtn dir="left" c="#444" /></HBtn>
          <HThumb />
          <HTrack />
          <HBtn><TriBtn dir="right" c="#444" /></HBtn>
        </HScroll>
        <MediaOverlay>
          <svg width="16" height="14" viewBox="0 0 16 14" fill="#a8a8a8"><path d="M1 0h5v14H1zM10 0h5v14h-5z" /></svg>
          <svg width="18" height="14" viewBox="0 0 18 14" fill="none" stroke="#a8a8a8"><path d="M.500.500h17v13H.500z" /><path d="M6 13q3-5 6 0z" fill="#a8a8a8" /></svg>
        </MediaOverlay>
        <Cursor>
          <svg width="12" height="17" viewBox="0 0 12 17"><path d="M1 1v13l3-3 2.500 5 2-1-2.500-5h4.500z" fill="#fff" stroke="#111" /></svg>
        </Cursor>
      </SheetBar>
    </Page>
  );
}
